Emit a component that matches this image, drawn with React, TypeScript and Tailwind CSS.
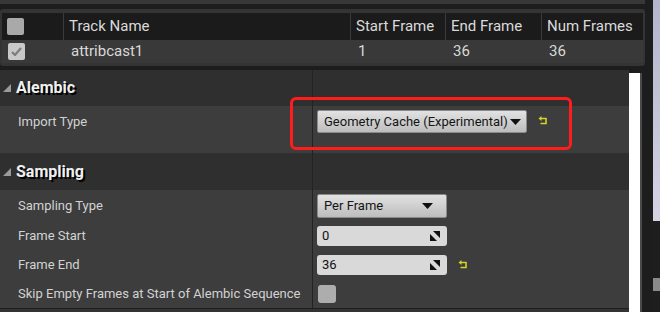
import React from 'react';

const font = { fontFamily: 'Roboto, "Noto Sans", sans-serif' };

function ResetIcon() {
  return (
    <svg width="10" height="9" viewBox="0 0 10 9" className="shrink-0">
      <path d="M3 2.5 H8 V7.5 H2.5" fill="none" stroke="#d2d22c" strokeWidth="1.6" />
      <path d="M0.5 2.5 L3.5 0 V5 Z" fill="#d2d22c" />
    </svg>
  );
}

function SpinIcon() {
  return (
    <svg width="10" height="10" viewBox="0 0 10 10">
      <path d="M3 0 H10 V7 Z" fill="#111" />
      <path d="M0 3 V10 H7 Z" fill="#111" />
    </svg>
  );
}

function Caret() {
  return (
    <svg width="11" height="6" viewBox="0 0 11 6">
      <path d="M0 0 H11 L5.5 6 Z" fill="#111" />
    </svg>
  );
}

function Triangle() {
  return (
    <svg width="8" height="8" viewBox="0 0 8 8" className="shrink-0">
      <path d="M8 0 V8 H0 Z" fill="#9a9a9a" />
    </svg>
  );
}

function Category({ title, h }: { title: string; h: string }) {
  return (
    <div className={`flex ${h} bg-[#2f2f2f]`}>
      <div className="flex w-[313px] items-center gap-[5px] border-r border-[#232323] pl-[3px]">
        <Triangle />
        <span className="text-[16px] font-bold text-[#f0f0f0] [text-shadow:2px_2px_0_#000]">{title}</span>
      </div>
      <div className="flex-1" />
    </div>
  );
}

function Row({ label, children, h = 'h-[29px]', top }: { label: string; children?: React.ReactNode; h?: string; top?: boolean }) {
  return (
    <div className={`flex ${h} bg-[#3d3d3d]`}>
      <div className={`flex w-[313px] border-r border-[#232323] pl-[18px] text-[13px] text-[#d2d2d2] ${top ? 'items-start pt-[6px]' : 'items-center'}`}>
        {label}
      </div>
      <div className={`flex flex-1 gap-[11px] pl-[4px] ${top ? 'items-start pt-[4px]' : 'items-center'}`}>{children}</div>
    </div>
  );
}

function NumberBox({ value }: { value: string }) {
  return (
    <div className="flex h-[20px] w-[130px] items-center justify-between rounded-[3px] bg-[#d9d9d9] pl-[5px] pr-[7px] text-[13px] text-[#111]">
      <span>{value}</span>
      <SpinIcon />
    </div>
  );
}

export default function App() {
  return (
    <div className="relative flex h-[312px] w-[660px] overflow-hidden bg-[#1d1d1d]" style={font}>
      <div className="flex w-[653px] flex-col">
        <div className="h-[4px] w-[645px] bg-[#383838]" />
        <div className="h-[5px]" />
        {/* track table */}
        <div className="mr-[8px] h-[57px] rounded-[3px] bg-[#343434] px-[2px] pt-[4px]">
          <div className="flex h-[27px] bg-[#1b1b1b] text-[15px] text-[#dadada]">
            <div className="flex w-[62px] items-center border-r border-[#3a3a3a] pl-[5px]">
              <div className="h-[17px] w-[17px] rounded-[2px] bg-[#a9a9a9]" />
            </div>
            <div className="flex w-[287px] items-center border-r border-[#3a3a3a] pl-[5px]">Track Name</div>
            <div className="flex w-[95px] items-center border-r border-[#3a3a3a] pl-[5px]">Start Frame</div>
            <div className="flex w-[96px] items-center border-r border-[#3a3a3a] pl-[5px]">End Frame</div>
            <div className="flex flex-1 items-center pl-[5px]">Num Frames</div>
          </div>
          <div className="flex h-[23px] bg-[#393939] text-[15px] text-[#d8d8d8]">
            <div className="flex w-[63px] items-center pl-[6px]">
              <div className="flex h-[17px] w-[17px] items-center justify-center rounded-[2px] bg-[#c9c9c9]">
                <svg width="11" height="9" viewBox="0 0 11 9">
                  <path d="M1 5 L4 8 L10 1" fill="none" stroke="#7d7d7d" strokeWidth="2.2" />
                </svg>
              </div>
            </div>
            <div className="flex w-[287px] items-center pl-[6px]">attribcast1</div>
            <div className="flex w-[95px] items-center pl-[6px]">1</div>
            <div className="flex w-[96px] items-center pl-[6px]">36</div>
            <div className="flex flex-1 items-center pl-[6px]">36</div>
          </div>
        </div>
        <div className="h-[4px]" />
        {/* details */}
        <div className="flex flex-1">
          <div className="flex w-[629px] flex-col">
            <Category title="Alembic" h="h-[36px]" />
            <Row label="Import Type" h="h-[47px]" top>
              <div className="flex h-[23px] w-[210px] items-center justify-between rounded-[2px] border border-[#8a8a8a] bg-gradient-to-b from-[#e2e2e2] to-[#bdbdbd] pl-[6px] pr-[5px] text-[13px] text-[#151515]">
                <span>Geometry Cache (Experimental)</span>
                <Caret />
              </div>
              <div className="pt-[6px]">
                <ResetIcon />
              </div>
            </Row>
            <Category title="Sampling" h="h-[37px]" />
            <Row label="Sampling Type" h="h-[31px]">
              <div className="flex h-[24px] w-[130px] items-center justify-between rounded-[2px] border border-[#8a8a8a] bg-gradient-to-b from-[#e2e2e2] to-[#bdbdbd] pl-[6px] pr-[13px] text-[13px] text-[#151515]">
                <span>Per Frame</span>
                <Caret />
              </div>
            </Row>
            <Row label="Frame Start">
              <NumberBox value="0" />
            </Row>
            <Row label="Frame End">
              <NumberBox value="36" />
              <ResetIcon />
            </Row>
            <Row label="Skip Empty Frames at Start of Alembic Sequence">
              <div className="ml-[1px] h-[18px] w-[18px] rounded-[3px] bg-[#adadad]" />
            </Row>
            <div className="h-[1px] bg-[#1e1e1e]" />
            <div className="flex-1 bg-[#333]" />
          </div>
          <div className="mt-[3px] w-[13px] border-r-2 border-[#4a4a4a] bg-white" />
          <div className="flex-1" />
        </div>
      </div>
      <div className="flex w-[7px] flex-col">
        <div className="h-[221px] bg-gradient-to-b from-[#b4b4cc] to-[#d4d4e4]" />
        <div className="h-[57px] bg-[#1e1e1e]" />
        <div className="h-[13px] bg-[#8a8a8a]" />
        <div className="flex-1 bg-[#1e1e1e]" />
      </div>
      {/* annotation */}
      <div className="absolute left-[290px] top-[97px] h-[53px] w-[282px] rounded-[6px] border-[3px] border-[#ff1c1c]" />
    </div>
  );
}
